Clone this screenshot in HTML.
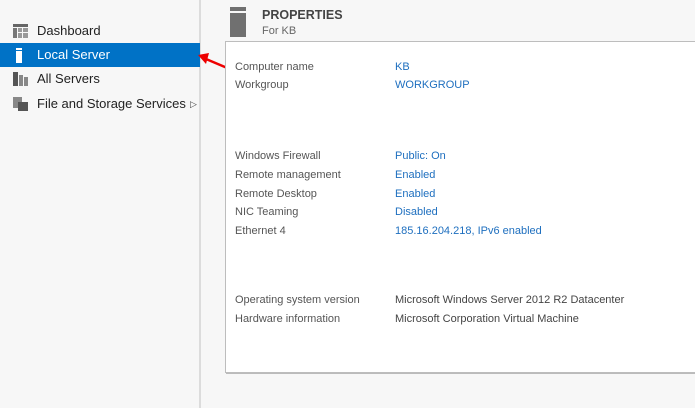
<!DOCTYPE html>
<html><head><meta charset="utf-8"><style>
*{margin:0;padding:0;box-sizing:border-box}
body{width:695px;height:408px;background:#f7f7f7;font-family:"Liberation Sans",sans-serif;position:relative;overflow:hidden}
#side{position:absolute;left:0;top:0;width:201px;height:408px;background:#f7f7f7;border-right:2px solid #dcdcdc}
.item{position:absolute;left:0;width:200px;height:24px;font-size:13px;color:#222;line-height:24px;padding-left:37px}
.item.sel{background:#0072c6;color:#fff}
.ic{position:absolute;left:13px;top:5px;width:15px;height:14px}
#panel{position:absolute;left:225px;top:41px;width:480px;height:332px;background:#fff;border:1px solid #bdbdbd;border-right:none;box-shadow:1px 1px 0 #bbb}
.r{position:absolute;font-size:11px;color:#555;left:235px}
.v{position:absolute;font-size:11px;color:#1e6fbf;left:395px}
</style></head><body>
<div id="side">
 <div class="item" style="top:19px"><svg class="ic" viewBox="0 0 15 14"><rect x="0" y="0" width="15" height="3" fill="#666"/><rect x="0" y="4" width="4" height="10" fill="#777"/><rect x="5" y="4" width="4" height="4" fill="#999"/><rect x="10" y="4" width="5" height="4" fill="#999"/><rect x="5" y="9" width="4" height="5" fill="#999"/><rect x="10" y="9" width="5" height="5" fill="#999"/></svg>Dashboard</div>
 <div class="item sel" style="top:43px"><svg class="ic" viewBox="0 0 15 14" style="top:4px;height:16px"><rect x="3" y="0" width="6" height="16" fill="#fff"/><rect x="3" y="2" width="6" height="1" fill="#0072c6"/></svg>Local Server</div>
 <div class="item" style="top:67px"><svg class="ic" viewBox="0 0 15 14"><rect x="0" y="0" width="5" height="14" fill="#555"/><rect x="6" y="3" width="4" height="11" fill="#888"/><rect x="11" y="5" width="4" height="9" fill="#888"/></svg>All Servers</div>
 <div class="item" style="top:92px"><svg class="ic" viewBox="0 0 15 14"><rect x="0" y="0" width="9" height="11" fill="#888"/><rect x="5" y="5" width="10" height="9" fill="#555"/></svg>File and Storage Services <span style="position:absolute;left:190px;font-size:9px;color:#444">▷</span></div>
</div>
<svg style="position:absolute;left:194px;top:50px" width="45" height="24"><line x1="38" y1="20" x2="12" y2="9" stroke="#e00" stroke-width="2.5"/><polygon points="4,5 15,3 12,14" fill="#e00"/></svg>
<svg style="position:absolute;left:230px;top:7px" width="16" height="30"><rect width="16" height="30" fill="#707070"/><rect x="0" y="4" width="16" height="2" fill="#f7f7f7"/></svg>
<div style="position:absolute;left:262px;top:8px;font-size:12.5px;font-weight:bold;color:#444">PROPERTIES</div>
<div style="position:absolute;left:262px;top:25px;font-size:11px;color:#666">For KB</div>
<div id="panel"></div>
<div class="r" style="top:61px">Computer name</div><div class="v" style="top:61px">KB</div>
<div class="r" style="top:79px">Workgroup</div><div class="v" style="top:79px">WORKGROUP</div>
<div class="r" style="top:150px">Windows Firewall</div><div class="v" style="top:150px">Public: On</div>
<div class="r" style="top:169px">Remote management</div><div class="v" style="top:169px">Enabled</div>
<div class="r" style="top:188px">Remote Desktop</div><div class="v" style="top:188px">Enabled</div>
<div class="r" style="top:206px">NIC Teaming</div><div class="v" style="top:206px">Disabled</div>
<div class="r" style="top:225px">Ethernet 4</div><div class="v" style="top:225px">185.16.204.218, IPv6 enabled</div>
<div class="r" style="top:294px">Operating system version</div><div class="v" style="top:294px;color:#444">Microsoft Windows Server 2012 R2 Datacenter</div>
<div class="r" style="top:313px">Hardware information</div><div class="v" style="top:313px;color:#444">Microsoft Corporation Virtual Machine</div>
</body></html>
